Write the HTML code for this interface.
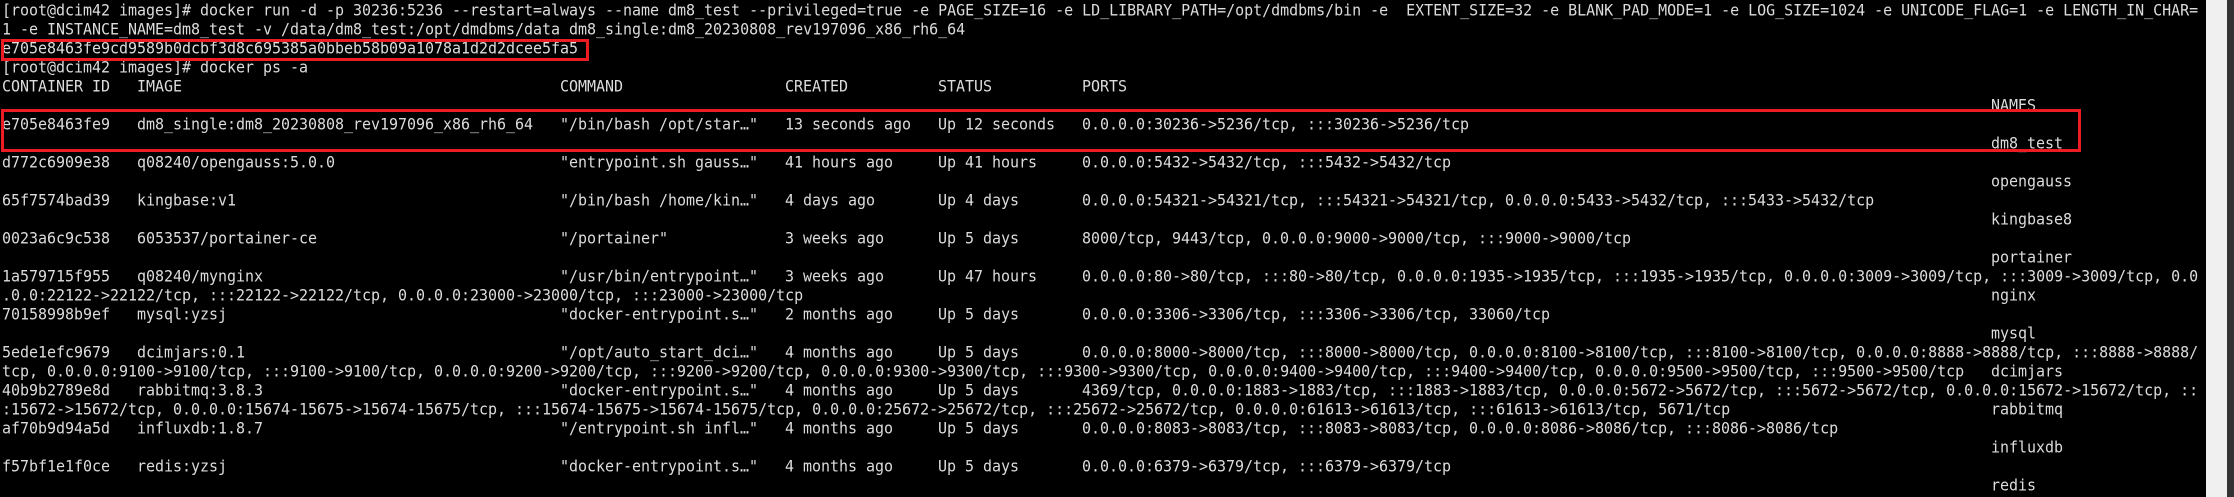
<!DOCTYPE html>
<html><head><meta charset="utf-8"><style>
html,body{margin:0;padding:0;background:#000}
#t{position:relative;width:2234px;height:497px;overflow:hidden;background:#000;color:#dcdcdc;font-family:"DejaVu Sans Mono","Liberation Mono",monospace;font-size:15px;letter-spacing:-0.03px}
#t div.l{position:absolute;left:2px;height:19px;line-height:19px;white-space:pre;transform:scaleY(1.07)}
#t span{position:absolute;top:0;white-space:pre}
.a{left:135px}.b{left:558px}.c{left:783px}.d{left:936px}.e{left:1080px}.f{left:1989px}
.r{position:absolute;border:3px solid #ed1c24;box-sizing:border-box}
#s1{position:absolute;left:2206px;top:0;width:21px;height:497px;background:#f0f0f0}
#s2{position:absolute;left:2227px;top:0;width:7px;height:497px;background:#333}
</style></head><body><div id="t">
<div class="l" style="top:1px">[root@dcim42 images]# docker run -d -p 30236:5236 --restart=always --name dm8_test --privileged=true -e PAGE_SIZE=16 -e LD_LIBRARY_PATH=/opt/dmdbms/bin -e  EXTENT_SIZE=32 -e BLANK_PAD_MODE=1 -e LOG_SIZE=1024 -e UNICODE_FLAG=1 -e LENGTH_IN_CHAR=</div>
<div class="l" style="top:20px">1 -e INSTANCE_NAME=dm8_test -v /data/dm8_test:/opt/dmdbms/data dm8_single:dm8_20230808_rev197096_x86_rh6_64</div>
<div class="l" style="top:39px">e705e8463fe9cd9589b0dcbf3d8c695385a0bbeb58b09a1078a1d2d2dcee5fa5</div>
<div class="l" style="top:58px">[root@dcim42 images]# docker ps -a</div>
<div class="l" style="top:77px">CONTAINER ID<span class="a">IMAGE</span><span class="b">COMMAND</span><span class="c">CREATED</span><span class="d">STATUS</span><span class="e">PORTS</span></div>
<div class="l" style="top:96px"><span class="f">NAMES</span></div>
<div class="l" style="top:115px">e705e8463fe9<span class="a">dm8_single:dm8_20230808_rev197096_x86_rh6_64</span><span class="b">"/bin/bash /opt/star…"</span><span class="c">13 seconds ago</span><span class="d">Up 12 seconds</span><span class="e">0.0.0.0:30236-&gt;5236/tcp, :::30236-&gt;5236/tcp</span></div>
<div class="l" style="top:134px"><span class="f">dm8_test</span></div>
<div class="l" style="top:153px">d772c6909e38<span class="a">q08240/opengauss:5.0.0</span><span class="b">"entrypoint.sh gauss…"</span><span class="c">41 hours ago</span><span class="d">Up 41 hours</span><span class="e">0.0.0.0:5432-&gt;5432/tcp, :::5432-&gt;5432/tcp</span></div>
<div class="l" style="top:172px"><span class="f">opengauss</span></div>
<div class="l" style="top:191px">65f7574bad39<span class="a">kingbase:v1</span><span class="b">"/bin/bash /home/kin…"</span><span class="c">4 days ago</span><span class="d">Up 4 days</span><span class="e">0.0.0.0:54321-&gt;54321/tcp, :::54321-&gt;54321/tcp, 0.0.0.0:5433-&gt;5432/tcp, :::5433-&gt;5432/tcp</span></div>
<div class="l" style="top:210px"><span class="f">kingbase8</span></div>
<div class="l" style="top:229px">0023a6c9c538<span class="a">6053537/portainer-ce</span><span class="b">"/portainer"</span><span class="c">3 weeks ago</span><span class="d">Up 5 days</span><span class="e">8000/tcp, 9443/tcp, 0.0.0.0:9000-&gt;9000/tcp, :::9000-&gt;9000/tcp</span></div>
<div class="l" style="top:248px"><span class="f">portainer</span></div>
<div class="l" style="top:267px">1a579715f955<span class="a">q08240/mynginx</span><span class="b">"/usr/bin/entrypoint…"</span><span class="c">3 weeks ago</span><span class="d">Up 47 hours</span><span class="e">0.0.0.0:80-&gt;80/tcp, :::80-&gt;80/tcp, 0.0.0.0:1935-&gt;1935/tcp, :::1935-&gt;1935/tcp, 0.0.0.0:3009-&gt;3009/tcp, :::3009-&gt;3009/tcp, 0.0</span></div>
<div class="l" style="top:286px">.0.0:22122-&gt;22122/tcp, :::22122-&gt;22122/tcp, 0.0.0.0:23000-&gt;23000/tcp, :::23000-&gt;23000/tcp<span class="f">nginx</span></div>
<div class="l" style="top:305px">70158998b9ef<span class="a">mysql:yzsj</span><span class="b">"docker-entrypoint.s…"</span><span class="c">2 months ago</span><span class="d">Up 5 days</span><span class="e">0.0.0.0:3306-&gt;3306/tcp, :::3306-&gt;3306/tcp, 33060/tcp</span></div>
<div class="l" style="top:324px"><span class="f">mysql</span></div>
<div class="l" style="top:343px">5ede1efc9679<span class="a">dcimjars:0.1</span><span class="b">"/opt/auto_start_dci…"</span><span class="c">4 months ago</span><span class="d">Up 5 days</span><span class="e">0.0.0.0:8000-&gt;8000/tcp, :::8000-&gt;8000/tcp, 0.0.0.0:8100-&gt;8100/tcp, :::8100-&gt;8100/tcp, 0.0.0.0:8888-&gt;8888/tcp, :::8888-&gt;8888/</span></div>
<div class="l" style="top:362px">tcp, 0.0.0.0:9100-&gt;9100/tcp, :::9100-&gt;9100/tcp, 0.0.0.0:9200-&gt;9200/tcp, :::9200-&gt;9200/tcp, 0.0.0.0:9300-&gt;9300/tcp, :::9300-&gt;9300/tcp, 0.0.0.0:9400-&gt;9400/tcp, :::9400-&gt;9400/tcp, 0.0.0.0:9500-&gt;9500/tcp, :::9500-&gt;9500/tcp<span class="f">dcimjars</span></div>
<div class="l" style="top:381px">40b9b2789e8d<span class="a">rabbitmq:3.8.3</span><span class="b">"docker-entrypoint.s…"</span><span class="c">4 months ago</span><span class="d">Up 5 days</span><span class="e">4369/tcp, 0.0.0.0:1883-&gt;1883/tcp, :::1883-&gt;1883/tcp, 0.0.0.0:5672-&gt;5672/tcp, :::5672-&gt;5672/tcp, 0.0.0.0:15672-&gt;15672/tcp, ::</span></div>
<div class="l" style="top:400px">:15672-&gt;15672/tcp, 0.0.0.0:15674-15675-&gt;15674-15675/tcp, :::15674-15675-&gt;15674-15675/tcp, 0.0.0.0:25672-&gt;25672/tcp, :::25672-&gt;25672/tcp, 0.0.0.0:61613-&gt;61613/tcp, :::61613-&gt;61613/tcp, 5671/tcp<span class="f">rabbitmq</span></div>
<div class="l" style="top:419px">af70b9d94a5d<span class="a">influxdb:1.8.7</span><span class="b">"/entrypoint.sh infl…"</span><span class="c">4 months ago</span><span class="d">Up 5 days</span><span class="e">0.0.0.0:8083-&gt;8083/tcp, :::8083-&gt;8083/tcp, 0.0.0.0:8086-&gt;8086/tcp, :::8086-&gt;8086/tcp</span></div>
<div class="l" style="top:438px"><span class="f">influxdb</span></div>
<div class="l" style="top:457px">f57bf1e1f0ce<span class="a">redis:yzsj</span><span class="b">"docker-entrypoint.s…"</span><span class="c">4 months ago</span><span class="d">Up 5 days</span><span class="e">0.0.0.0:6379-&gt;6379/tcp, :::6379-&gt;6379/tcp</span></div>
<div class="l" style="top:476px"><span class="f">redis</span></div>
<div class="r" style="left:1px;top:39px;width:588px;height:22px"></div>
<div class="r" style="left:1px;top:109px;width:2080px;height:43px"></div>
<div id="s1"></div><div id="s2"></div>
</div></body></html>
